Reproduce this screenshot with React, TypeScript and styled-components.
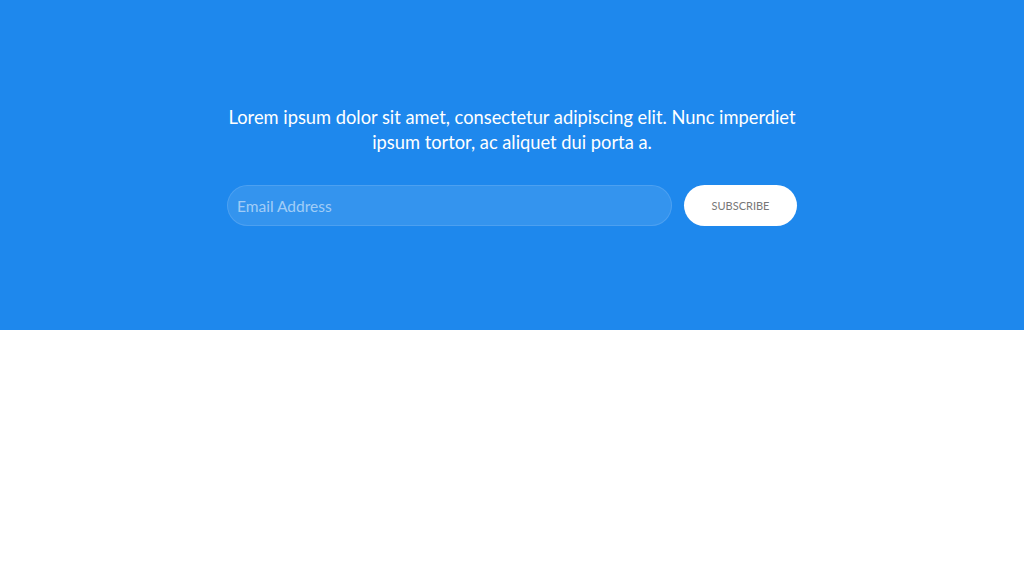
import styled, { createGlobalStyle } from 'styled-components'

const GlobalStyle = createGlobalStyle`
  body {
    margin: 0;
    background: #ffffff;
    font-family: Lato, 'Noto Sans', sans-serif;
  }
`

const Hero = styled.section`
  height: 330px;
  background-color: #1e88ed;
  display: flex;
  justify-content: center;
  padding-top: 105px;
  box-sizing: border-box;
`

const Content = styled.div`
  width: 570px;
  display: flex;
  flex-direction: column;
  gap: 30px;
`

const Lead = styled.p`
  margin: 0 -4px;
  color: #ffffff;
  font-size: 18.3px;
  line-height: 25px;
  text-align: center;
`

const Form = styled.form`
  display: flex;
  gap: 12px;
`

const EmailInput = styled.input`
  flex: 1;
  height: 41px;
  box-sizing: border-box;
  padding: 0 9px;
  border-radius: 21px;
  border: 1px solid rgba(255, 255, 255, 0.12);
  background-color: rgba(255, 255, 255, 0.1);
  color: #ffffff;
  font-family: inherit;
  font-size: 15.5px;
  outline: none;
  &::placeholder {
    color: rgba(255, 255, 255, 0.55);
  }
`

const SubscribeButton = styled.button`
  width: 113px;
  height: 41px;
  border: none;
  border-radius: 21px;
  background-color: #ffffff;
  color: #777777;
  font-family: inherit;
  font-size: 11px;
  text-transform: uppercase;
  cursor: pointer;
`

const App = () => {
  return (
    <>
      <GlobalStyle />
      <Hero>
        <Content>
          <Lead>
            Lorem ipsum dolor sit amet, consectetur adipiscing elit. Nunc imperdiet ipsum tortor, ac
            aliquet dui porta a.
          </Lead>
          <Form onSubmit={(e) => e.preventDefault()}>
            <EmailInput type="email" placeholder="Email Address" />
            <SubscribeButton type="submit">Subscribe</SubscribeButton>
          </Form>
        </Content>
      </Hero>
    </>
  )
}

export default App
